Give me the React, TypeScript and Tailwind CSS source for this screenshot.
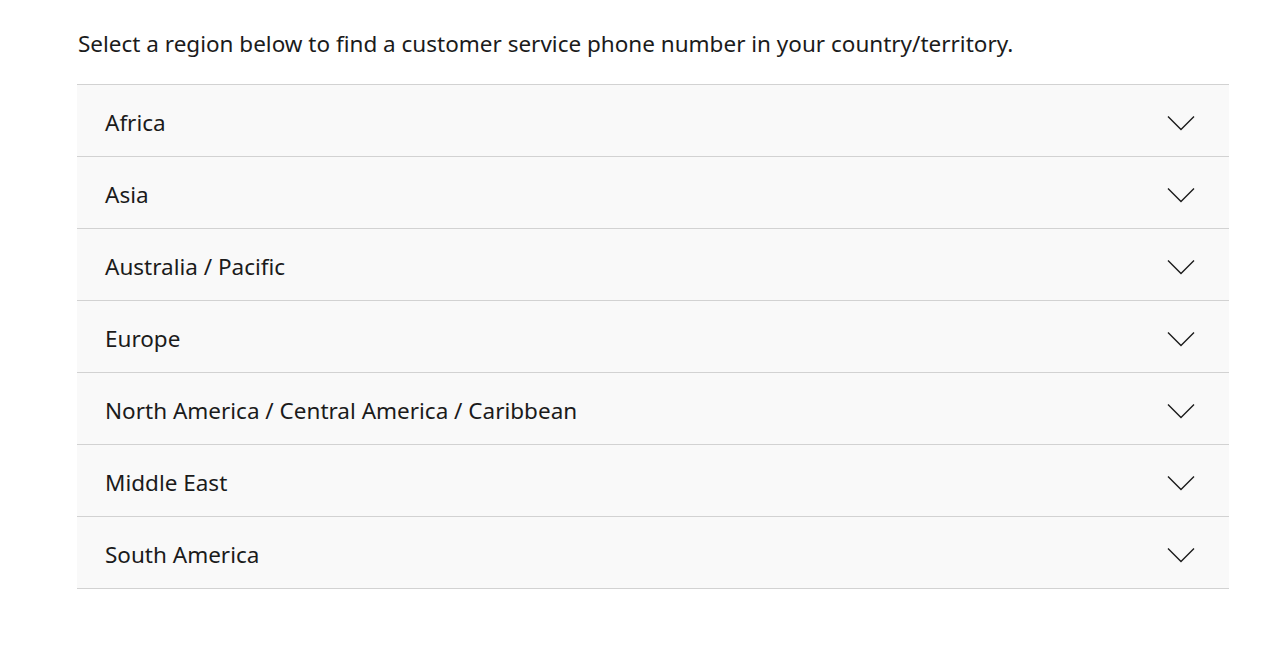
const regions = [
  "Africa",
  "Asia",
  "Australia / Pacific",
  "Europe",
  "North America / Central America / Caribbean",
  "Middle East",
  "South America",
];

function Chevron() {
  return (
    <svg width="28" height="16" viewBox="0 0 28 16" fill="none" className="shrink-0">
      <path d="M1 1.5 L14 14.5 L27 1.5" stroke="#1b1b1b" strokeWidth="1.4" />
    </svg>
  );
}

export default function App() {
  return (
    <div className="min-h-screen bg-white font-['Noto_Sans',sans-serif] text-[#1b1b1b]">
      <div className="ml-[77px] w-[1152px] pt-[29px]">
        <p className="pl-[1px] text-[22.5px] leading-[30px]">
          Select a region below to find a customer service phone number in your country/territory.
        </p>
        <div className="mt-[25px] border-t border-[#d2d2d2]">
          {regions.map((name) => (
            <button
              key={name}
              className="flex h-[72px] w-full items-center justify-between border-b border-[#d2d2d2] bg-[#f9f9f9] pt-[4px] pl-[28px] pr-[34px] text-left"
            >
              <span className="text-[22.5px]">{name}</span>
              <Chevron />
            </button>
          ))}
        </div>
      </div>
    </div>
  );
}
